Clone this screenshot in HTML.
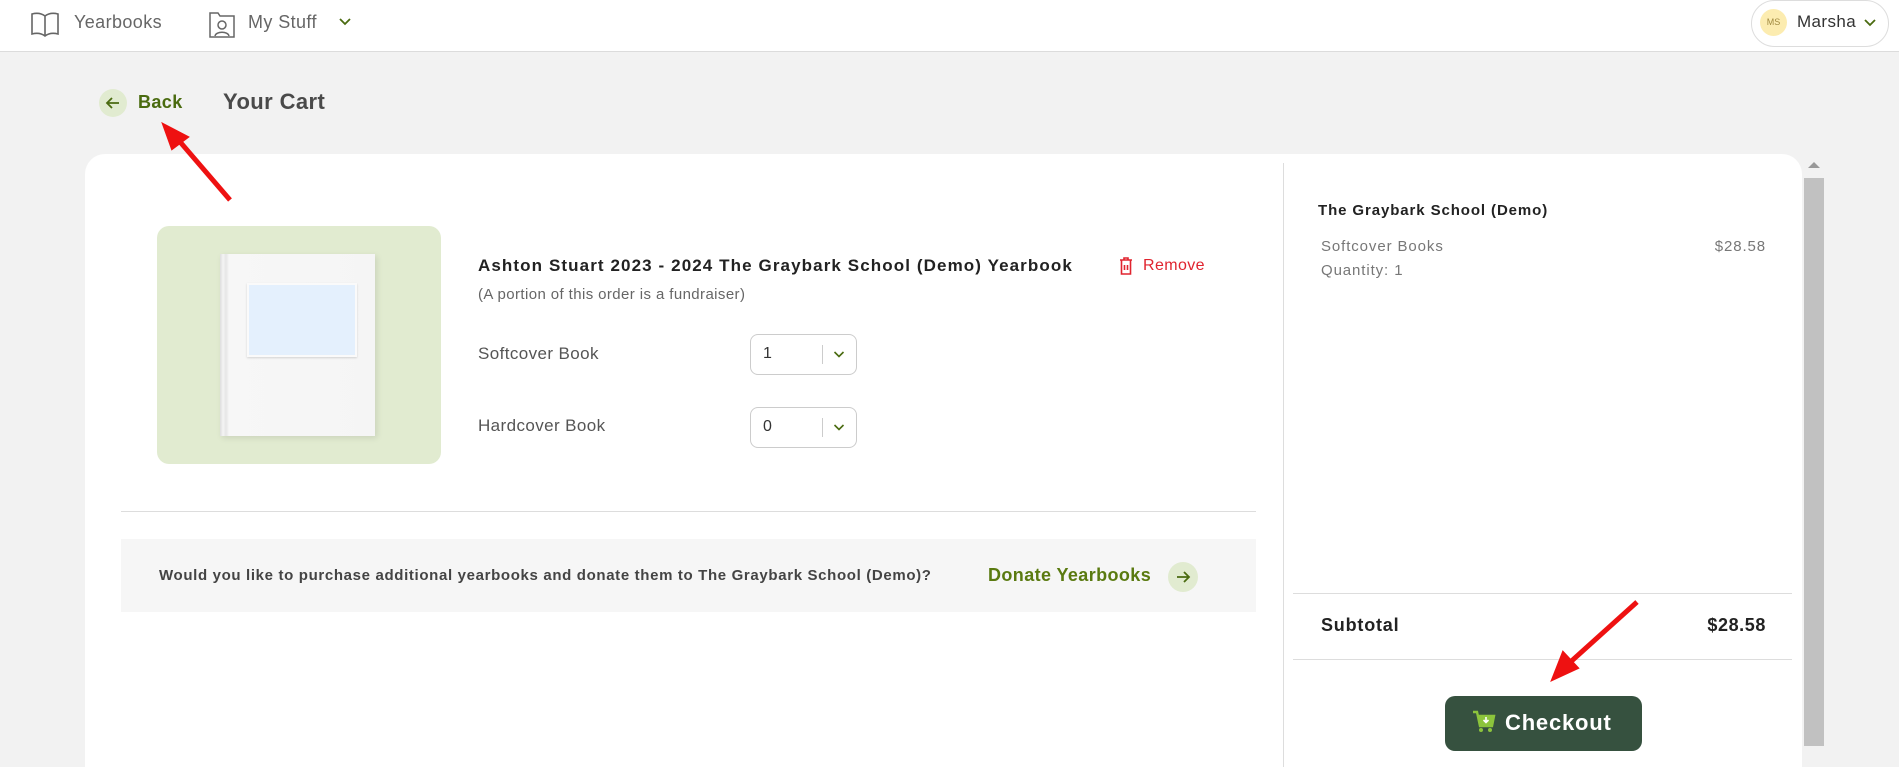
<!DOCTYPE html>
<html style="overflow:hidden;height:767px"><head><meta charset="utf-8"><style>
*{margin:0;padding:0;box-sizing:border-box}
body{width:1899px;height:767px;overflow:hidden;background:#f2f2f2;font-family:"Liberation Sans",sans-serif;position:relative;color:#333;letter-spacing:0.4px}
.a{position:absolute;white-space:nowrap}
</style></head><body>
<div class="a" style="left:0;top:0;width:1899px;height:52px;background:#fff;border-bottom:1px solid #dcdcdc"></div>
<svg class="a" style="left:30px;top:9px" width="30" height="30" viewBox="0 0 30 30" fill="none" stroke="#666" stroke-width="1.6"><path d="M15 7 C11 4 6 4 2 5 V25 C6 24 11 24 15 27 C19 24 24 24 28 25 V5 C24 4 19 4 15 7 Z M15 7 V27"/></svg>
<div class="a" style="left:74px;top:12px;font-size:18px;color:#666">Yearbooks</div>
<svg class="a" style="left:208px;top:9px" width="28" height="30" viewBox="0 0 28 30" fill="none" stroke="#666" stroke-width="1.5"><path d="M2 4 H10 L12 7 H26 V28 H2 Z"/><circle cx="14" cy="16" r="4"/><path d="M7 27 C8 22 20 22 21 27"/></svg>
<div class="a" style="left:248px;top:12px;font-size:18px;color:#666">My Stuff</div>
<svg class="a" style="left:338px;top:17px" width="14" height="10" viewBox="0 0 14 10" fill="none" stroke="#4a6b10" stroke-width="1.8"><path d="M2 2 L7 7 L12 2"/></svg>
<div class="a" style="left:1751px;top:0;width:138px;height:47px;border:1px solid #ddd;border-radius:24px;background:#fff"></div>
<div class="a" style="left:1760px;top:9px;width:27px;height:27px;border-radius:50%;background:#fcecb0;font-size:9px;color:#a08a40;text-align:center;line-height:27px;letter-spacing:0">MS</div>
<div class="a" style="left:1797px;top:12px;font-size:17px;color:#333">Marsha</div>
<svg class="a" style="left:1863px;top:18px" width="14" height="10" viewBox="0 0 14 10" fill="none" stroke="#4a6b10" stroke-width="1.8"><path d="M2 2 L7 7 L12 2"/></svg>

<div class="a" style="left:99px;top:89px;width:28px;height:28px;border-radius:50%;background:#e1ebd0"></div>
<svg class="a" style="left:105px;top:95px" width="16" height="16" viewBox="0 0 16 16" fill="none" stroke="#4a6b10" stroke-width="1.8"><path d="M14 8 H3 M7 3 L2 8 L7 13"/></svg>
<div class="a" style="left:138px;top:92px;font-size:18px;font-weight:bold;color:#4a6b10">Back</div>
<div class="a" style="left:223px;top:89px;font-size:22px;font-weight:bold;color:#4a4a4a">Your Cart</div>

<div class="a" style="left:85px;top:154px;width:1717px;height:613px;background:#fff;border-radius:20px 20px 0 0"></div>
<div class="a" style="left:1283px;top:163px;width:1px;height:604px;background:#ddd"></div>
<div class="a" style="left:1804px;top:178px;width:20px;height:568px;background:#c1c1c1"></div>
<svg class="a" style="left:1807px;top:161px" width="14" height="8"><path d="M1 7 L7 1 L13 7 Z" fill="#999"/></svg>

<div class="a" style="left:157px;top:226px;width:284px;height:238px;background:#e1ebd0;border-radius:12px"></div>
<div class="a" style="left:220px;top:254px;width:155px;height:182px;background:linear-gradient(90deg,#ddd 0,#f4f4f4 3px,#e6e6e6 6px,#f7f7f7 9px,#f5f5f5 100%);box-shadow:2px 2px 6px rgba(0,0,0,.1)"></div>
<div class="a" style="left:247px;top:283px;width:110px;height:74px;background:#e4f0fd;border:2px solid #fafafa;box-shadow:0 1px 2px rgba(0,0,0,.15)"></div>

<div class="a" style="left:478px;top:256px;font-size:17px;font-weight:bold;color:#222;letter-spacing:1.1px">Ashton Stuart 2023 - 2024 The Graybark School (Demo) Yearbook</div>
<div class="a" style="left:478px;top:286px;font-size:15px;color:#666">(A portion of this order is a fundraiser)</div>
<svg class="a" style="left:1119px;top:257px" width="14" height="18" viewBox="0 0 14 18" fill="none" stroke="#e0242f" stroke-width="1.6"><path d="M1 3 H13 M5 3 V1 H9 V3 M2.5 3 V17 H11.5 V3 M5.5 8 V13 M8.5 8 V13"/></svg>
<div class="a" style="left:1143px;top:257px;font-size:16px;color:#e0242f">Remove</div>

<div class="a" style="left:478px;top:344px;font-size:17px;color:#555">Softcover Book</div>
<div class="a" style="left:750px;top:334px;width:107px;height:41px;border:1px solid #ccc;border-radius:8px;background:#fff"></div>
<div class="a" style="left:763px;top:345px;font-size:16px;color:#333">1</div>
<div class="a" style="left:822px;top:345px;width:1px;height:19px;background:#ccc"></div>
<svg class="a" style="left:833px;top:350px" width="12" height="9" viewBox="0 0 12 9" fill="none" stroke="#4a6b10" stroke-width="1.6"><path d="M1.5 2 L6 6.5 L10.5 2"/></svg>
<div class="a" style="left:478px;top:416px;font-size:17px;color:#555">Hardcover Book</div>
<div class="a" style="left:750px;top:407px;width:107px;height:41px;border:1px solid #ccc;border-radius:8px;background:#fff"></div>
<div class="a" style="left:763px;top:418px;font-size:16px;color:#333">0</div>
<div class="a" style="left:822px;top:418px;width:1px;height:19px;background:#ccc"></div>
<svg class="a" style="left:833px;top:423px" width="12" height="9" viewBox="0 0 12 9" fill="none" stroke="#4a6b10" stroke-width="1.6"><path d="M1.5 2 L6 6.5 L10.5 2"/></svg>

<div class="a" style="left:121px;top:511px;width:1135px;height:1px;background:#ddd"></div>
<div class="a" style="left:121px;top:539px;width:1135px;height:73px;background:#f6f6f6"></div>
<div class="a" style="left:159px;top:567px;font-size:15px;font-weight:bold;color:#444;letter-spacing:0.65px">Would you like to purchase additional yearbooks and donate them to The Graybark School (Demo)?</div>
<div class="a" style="left:988px;top:565px;font-size:18px;font-weight:bold;color:#5a7a10">Donate Yearbooks</div>
<div class="a" style="left:1168px;top:562px;width:30px;height:30px;border-radius:50%;background:#e1ebd0"></div>
<svg class="a" style="left:1175px;top:569px" width="16" height="16" viewBox="0 0 16 16" fill="none" stroke="#4a6b10" stroke-width="1.8"><path d="M2 8 H13 M9 3 L14 8 L9 13"/></svg>

<div class="a" style="left:1318px;top:202px;font-size:15px;font-weight:bold;color:#222;letter-spacing:0.9px">The Graybark School (Demo)</div>
<div class="a" style="left:1321px;top:238px;font-size:15px;color:#777;letter-spacing:0.9px">Softcover Books</div>
<div class="a" style="left:1321px;top:262px;font-size:15px;color:#777;letter-spacing:0.9px">Quantity: 1</div>
<div class="a" style="left:1690px;top:238px;width:76px;text-align:right;font-size:15px;color:#777;letter-spacing:0.9px">$28.58</div>
<div class="a" style="left:1293px;top:593px;width:499px;height:1px;background:#ddd"></div>
<div class="a" style="left:1321px;top:615px;font-size:18px;font-weight:bold;color:#222;letter-spacing:0.8px">Subtotal</div>
<div class="a" style="left:1670px;top:615px;width:96px;text-align:right;font-size:18px;font-weight:bold;color:#222;letter-spacing:0.6px">$28.58</div>
<div class="a" style="left:1293px;top:659px;width:499px;height:1px;background:#ddd"></div>

<div class="a" style="left:1445px;top:696px;width:197px;height:55px;background:#36513f;border-radius:10px"></div>
<svg class="a" style="left:1472px;top:709px" width="24" height="24" viewBox="0 0 24 24"><path d="M1 3 H5 L8 17 H20 L22 7 H6" fill="none" stroke="#8cc43c" stroke-width="2.4"/><rect x="7" y="7" width="14" height="9" fill="#8cc43c"/><path d="M14 8 V13 M11.5 11 L14 13.5 L16.5 11" stroke="#fff" stroke-width="1.6" fill="none"/><circle cx="9" cy="21" r="2" fill="#8cc43c"/><circle cx="18" cy="21" r="2" fill="#8cc43c"/></svg>
<div class="a" style="left:1505px;top:710px;font-size:22px;font-weight:bold;color:#fff;letter-spacing:0.8px">Checkout</div>

<svg class="a" style="left:0;top:0" width="1899" height="767" viewBox="0 0 1899 767">
<g fill="#ee1111" stroke="#ee1111">
<path d="M230 200 L175 136" stroke-width="5"/>
<path d="M163 124 L188 137 L172 149 Z" stroke-width="2"/>
<path d="M1637 602 L1566 666" stroke-width="5"/>
<path d="M1552 680 L1563 652 L1578 668 Z" stroke-width="2"/>
</g></svg>
</body></html>
